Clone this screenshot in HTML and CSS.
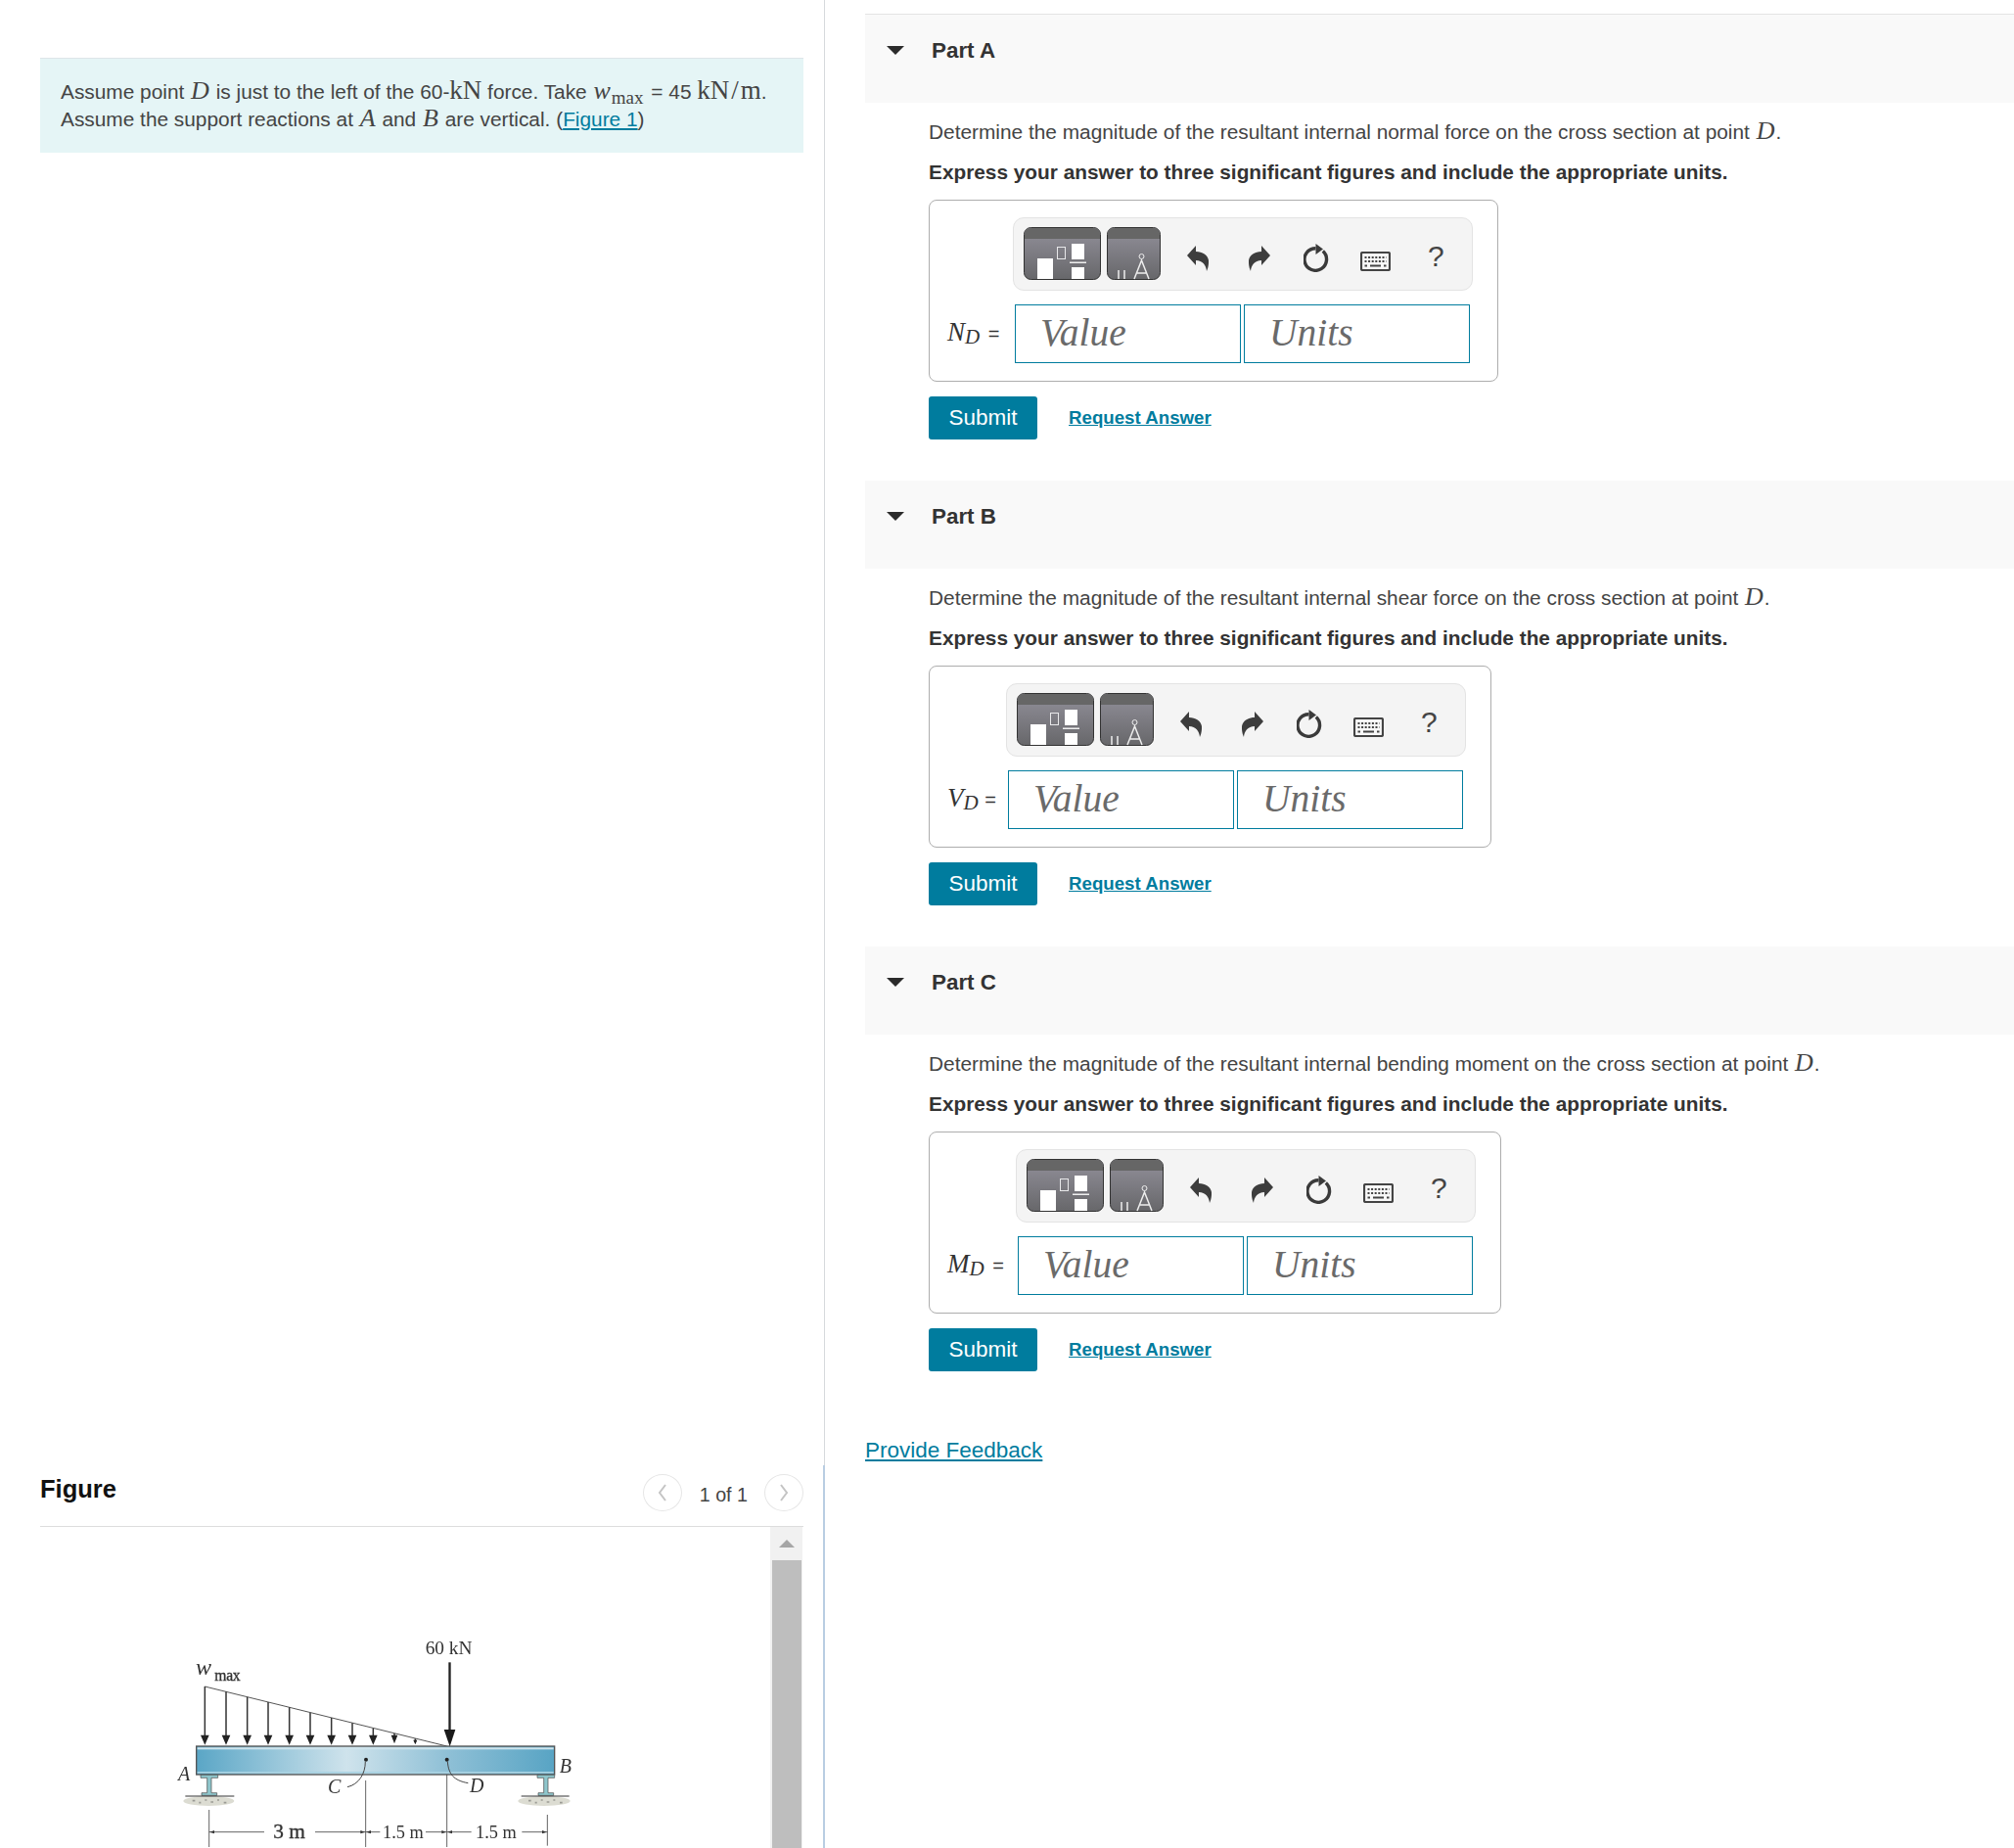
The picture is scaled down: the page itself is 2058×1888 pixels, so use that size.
FILE: index.html
```html
<!DOCTYPE html>
<html lang="en">
<head>
<meta charset="utf-8">
<title>Internal forces</title>
<link rel="stylesheet" href="styles.css">
</head>
<body>
<svg class="defs" width="0" height="0" aria-hidden="true">
  <defs>
    <linearGradient id="btnGrad" x1="0" y1="0" x2="0" y2="1"><stop offset="0" stop-color="#92909a"/><stop offset="1" stop-color="#67676a"/></linearGradient>
    <symbol id="i-tpl" viewBox="0 0 79 54">
      <rect x=".5" y=".5" width="78" height="53" rx="7" fill="url(#btnGrad)" stroke="#333"/>
      <path d="M1 12V7a6 6 0 0 1 6-6h65a6 6 0 0 1 6 6v5z" fill="#666"/>
      <rect x="14" y="32" width="16" height="21" fill="#fff"/>
      <rect x="34.500" y="20.500" width="8" height="12" fill="none" stroke="#e8e8ea"/>
      <rect x="49" y="17" width="13" height="16" fill="#fff"/>
      <rect x="47" y="35.500" width="17" height="1.500" fill="#eee"/>
      <rect x="49" y="41" width="13" height="12" fill="#fff"/>
    </symbol>
    <symbol id="i-unit" viewBox="0 0 55 54">
      <rect x=".5" y=".5" width="54" height="53" rx="7" fill="url(#btnGrad)" stroke="#333"/>
      <path d="M1 12V7a6 6 0 0 1 6-6h41a6 6 0 0 1 6 6v5z" fill="#666"/>
      <path d="M12 44v9M18 44v9" stroke="#eee" stroke-width="1.500"/>
      <path d="M28 53l7.500-19L43 53M31 47h9" fill="none" stroke="#eee" stroke-width="1.500"/>
      <circle cx="35.500" cy="30" r="2.500" fill="none" stroke="#eee"/>
    </symbol>
    <symbol id="i-undo" viewBox="0 0 22 26"><path d="M0 10 9 0V6C17 6 23 11 22 18 21.800 21 21 24 20 26 19.500 20 16 15 9 15V20Z" fill="#3d3d3d"/></symbol>
    <symbol id="i-redo" viewBox="0 0 22 26"><path d="M22 10 13 0V6C5 6-1 11 0 18 .2 21 1 24 2 26 2.500 20 6 15 13 15V20Z" fill="#3d3d3d"/></symbol>
    <symbol id="i-reload" viewBox="0 0 26 29"><path d="M19.800 7.600A11.300 11.300 0 1 1 12.500 4.700" fill="none" stroke="#3a3a3a" stroke-width="3.400"/><path d="M12.500 0 20 5.500 12.500 11Z" fill="#3a3a3a"/></symbol>
    <symbol id="i-keys" viewBox="0 0 31 20">
      <rect x="1" y="1" width="29" height="18" rx="1.500" fill="#f8f8f8" stroke="#444" stroke-width="2.200"/>
      <path d="M4.500 6H26.500M4.500 10H26.500" stroke="#444" stroke-width="2" stroke-dasharray="2 1.600" fill="none"/>
      <path d="M4.500 14.500H7M10 14.500H21M24 14.500H26.500" stroke="#444" stroke-width="2" fill="none"/>
    </symbol>
  </defs>
</svg>

<div class="page">
  <main class="left">
    <div class="intro">
      Assume point <i class="m">D</i> is just to the left of the 60-<span class="mr">kN</span> force. Take <i class="m">w</i><sub class="msub">max</sub> = 45 <span class="mr">kN<span class="slash">/</span>m</span>.<br>
      Assume the support reactions at <i class="m">A</i> and <i class="m">B</i> are vertical. (<a class="link" href="#">Figure 1</a>)
    </div>

    <section class="figure">
      <header class="fig-head">
        <h2 class="fig-title">Figure</h2>
        <div class="pager">
          <span class="round"><svg class="chev" viewBox="0 0 10 18"><path d="M8 1 2 9l6 8" fill="none" stroke="#c4c4c4" stroke-width="2"/></svg></span>
          <span class="count">1 of 1</span>
          <span class="round"><svg class="chev" viewBox="0 0 10 18"><path d="M2 1l6 8-6 8" fill="none" stroke="#c4c4c4" stroke-width="2"/></svg></span>
        </div>
      </header>
      <div class="fig-body">
        <svg class="diagram" viewBox="0 0 1350 714" width="450" height="238">
          <defs>
            <linearGradient id="beam" x1="0" y1="0" x2="1" y2="0">
              <stop offset="0" stop-color="#5aa6c6"/><stop offset=".42" stop-color="#cfe3ec"/><stop offset=".7" stop-color="#8fc0d6"/><stop offset="1" stop-color="#58a4c4"/>
            </linearGradient>
          </defs>
          <ellipse cx="130" cy="573" rx="78" ry="15" fill="#dcdcd2"/>
          <ellipse cx="1158" cy="573" rx="80" ry="15" fill="#dcdcd2"/>
          <path d="M80 572h8M100 578h6M118 570h6M136 576h8M156 570h6M176 578h8M1110 572h8M1130 578h6M1148 570h6M1166 576h8M1186 570h6M1206 578h8" stroke="#9a9a94" stroke-width="5" fill="none"/>
          <path d="M118 222 860 405" stroke="#555" stroke-width="3" fill="none"/>
          <g stroke="#333" stroke-width="4.500" fill="none">
            <path d="M118 222V380M183 238V380M248 254V380M312 270V380M377 286V380M441 302V380M506 318V380M570 334V380M634 350V380M699 366V380M763 382V392"/>
          </g>
          <g fill="#222">
            <path d="M105 371h26l-13 30zM170 371h26l-13 30zM235 371h26l-13 30zM299 371h26l-13 30zM364 371h26l-13 30zM428 371h26l-13 30zM493 371h26l-13 30zM557 371h26l-13 30zM621 371h26l-13 30zM689 371h20l-10 26zM757 386h12l-6 14z"/>
          </g>
          <rect x="92" y="405" width="1098" height="87" fill="url(#beam)" stroke="#555" stroke-width="4"/>
          <rect x="95" y="409" width="1092" height="6" fill="#cfe4ec"/>
          <rect x="95" y="483" width="1092" height="5" fill="#a9d2e2"/>
          <rect x="865" y="148" width="7" height="215" fill="#222"/>
          <path d="M851 354h35l-17 52z" fill="#1a1a1a"/>
          <circle cx="612" cy="446" r="6" fill="#222"/>
          <circle cx="860" cy="446" r="6" fill="#222"/>
          <path d="M610 452C610 490 590 522 555 530M862 452C865 490 880 510 925 518" stroke="#444" stroke-width="3" fill="none"/>
          <g fill="#8fc6cc" stroke="#444" stroke-width="2">
            <path d="M105 493h53v9h-20v46h17v8h-47v-8h17v-46h-20z"/>
            <path d="M1137 493h53v9h-20v46h17v8h-47v-8h17v-46h-20z"/>
          </g>
          <path d="M58 558H208M1088 558H1235" stroke="#333" stroke-width="3"/>
          <g stroke="#444" stroke-width="2.500" fill="none">
            <path d="M131 600V714M611 510V714M860 492V714M1168 615V710"/>
            <path d="M131 668H300M456 668H611M611 668H655M795 668H860M860 668H935M1090 668H1168"/>
          </g>
          <path d="M133 668l14-5v10zM609 668l-14-5v10zM613 668l14-5v10zM858 668l-14-5v10zM862 668l14-5v10zM1166 668l-14-5v10z" fill="#333"/>
          <g>
            <text x="794" y="122" class="dt-n">60 kN</text>
            <text x="90" y="186" class="dt-i dt-w">w</text>
            <text x="148" y="205" class="dt-s">max</text>
            <text x="36" y="511" class="dt-i">A</text>
            <text x="1205" y="487" class="dt-i">B</text>
            <text x="495" y="549" class="dt-i">C</text>
            <text x="930" y="545" class="dt-i">D</text>
            <text x="328" y="688" class="dt-b">3 m</text>
            <text x="663" y="688" class="dt-n2">1.5 m</text>
            <text x="948" y="688" class="dt-n2">1.5 m</text>
          </g>
        </svg>
        <div class="scrollbar"><span class="sb-btn"><span class="sb-up"></span></span><span class="sb-thumb"></span></div>
      </div>
    </section>
  </main>

  <div class="right">
    <section class="part part-first">
      <header class="part-head"><span class="caret"></span><h3 class="part-title">Part A</h3></header>
      <div class="part-body">
        <p class="q">Determine the magnitude of the resultant internal normal force on the cross section at point <i class="m">D</i>.</p>
        <p class="req">Express your answer to three significant figures and include the appropriate units.</p>
        <div class="answer">
          <div class="toolbar">
            <svg class="tb-tpl"><use href="#i-tpl"/></svg>
            <svg class="tb-unit"><use href="#i-unit"/></svg>
            <svg class="ic ic-undo"><use href="#i-undo"/></svg>
            <svg class="ic ic-redo"><use href="#i-redo"/></svg>
            <svg class="ic-reload"><use href="#i-reload"/></svg>
            <svg class="ic-keys"><use href="#i-keys"/></svg>
            <span class="ic-help">?</span>
          </div>
          <div class="lab lab-a"><i class="lab-v">N</i><i class="lab-s">D</i> =</div>
          <div class="fields"><span class="field">Value</span><span class="field">Units</span></div>
        </div>
        <div class="actions"><button class="submit">Submit</button><a class="reqans" href="#">Request Answer</a></div>
      </div>
    </section>

    <section class="part">
      <header class="part-head"><span class="caret"></span><h3 class="part-title">Part B</h3></header>
      <div class="part-body">
        <p class="q">Determine the magnitude of the resultant internal shear force on the cross section at point <i class="m">D</i>.</p>
        <p class="req">Express your answer to three significant figures and include the appropriate units.</p>
        <div class="answer">
          <div class="toolbar">
            <svg class="tb-tpl"><use href="#i-tpl"/></svg>
            <svg class="tb-unit"><use href="#i-unit"/></svg>
            <svg class="ic ic-undo"><use href="#i-undo"/></svg>
            <svg class="ic ic-redo"><use href="#i-redo"/></svg>
            <svg class="ic-reload"><use href="#i-reload"/></svg>
            <svg class="ic-keys"><use href="#i-keys"/></svg>
            <span class="ic-help">?</span>
          </div>
          <div class="lab lab-b"><i class="lab-v">V</i><i class="lab-s">D</i> =</div>
          <div class="fields"><span class="field">Value</span><span class="field">Units</span></div>
        </div>
        <div class="actions"><button class="submit">Submit</button><a class="reqans" href="#">Request Answer</a></div>
      </div>
    </section>

    <section class="part">
      <header class="part-head"><span class="caret"></span><h3 class="part-title">Part C</h3></header>
      <div class="part-body">
        <p class="q">Determine the magnitude of the resultant internal bending moment on the cross section at point <i class="m">D</i>.</p>
        <p class="req">Express your answer to three significant figures and include the appropriate units.</p>
        <div class="answer">
          <div class="toolbar">
            <svg class="tb-tpl"><use href="#i-tpl"/></svg>
            <svg class="tb-unit"><use href="#i-unit"/></svg>
            <svg class="ic ic-undo"><use href="#i-undo"/></svg>
            <svg class="ic ic-redo"><use href="#i-redo"/></svg>
            <svg class="ic-reload"><use href="#i-reload"/></svg>
            <svg class="ic-keys"><use href="#i-keys"/></svg>
            <span class="ic-help">?</span>
          </div>
          <div class="lab lab-c"><i class="lab-v">M</i><i class="lab-s">D</i> =</div>
          <div class="fields"><span class="field">Value</span><span class="field">Units</span></div>
        </div>
        <div class="actions"><button class="submit">Submit</button><a class="reqans" href="#">Request Answer</a></div>
      </div>
    </section>

    <a class="feedback" href="#">Provide Feedback</a>
  </div>
</div>
</body>
</html>
```

FILE: styles.css
```css
* { box-sizing: border-box; }
html, body { margin: 0; padding: 0; background: #fff; }
body { width: 2058px; height: 1888px; overflow: hidden; font-family: "Liberation Sans", Arial, sans-serif; font-size: 20px; color: #333; }
.defs { position: absolute; }
.page { display: flex; width: 2058px; height: 1888px; }

.left { width: 843px; flex: none; padding: 59px 22px 0 41px; display: flex; flex-direction: column; background: linear-gradient(#d6d9dc, #d6d9dc) right top / 1px 1497px no-repeat, linear-gradient(#b9cde2, #b9cde2) right bottom / 2px 391px no-repeat; }
.intro { height: 97px; background: #e5f5f6; border-top: 1px solid #dde5e8; padding: 20px 20px 0 21px; line-height: 28px; font-size: 20.850px; color: #444; }
.m { font-family: "Liberation Serif", serif; font-style: italic; font-size: 26px; line-height: 0; margin: 0 1px; }
.mr { font-family: "Liberation Serif", serif; font-size: 27px; line-height: 0; }
.slash { margin: 0 2px; }
.msub { font-family: "Liberation Serif", serif; font-size: 19px; line-height: 0; margin-right: 2px; }
.link { color: #007c9e; text-decoration: underline; }

.figure { margin-top: 1350px; flex: 1; display: flex; flex-direction: column; min-height: 0; }
.fig-head { display: flex; justify-content: space-between; align-items: flex-start; height: 54px; border-bottom: 1px solid #ddd; }
.fig-title { margin: 0; font-size: 25.500px; line-height: 30px; font-weight: bold; color: #111; }
.pager { display: flex; align-items: center; height: 38px; }
.round { width: 40px; height: 38px; border: 1px solid #e6e6e6; border-radius: 50%; display: flex; align-items: center; justify-content: center; }
.chev { width: 10px; height: 18px; }
.count { margin: 5px 17px 0 18px; font-size: 19.700px; color: #444; }

.fig-body { position: relative; flex: 1; min-height: 0; overflow: hidden; padding: 89px 0 0 129px; }
.diagram { display: block; filter: blur(.5px); }
.dt-n { font: 58px "Liberation Serif", serif; fill: #333; }
.dt-n2 { font: 55px "Liberation Serif", serif; fill: #333; }
.dt-b { font: 64px "Liberation Serif", serif; fill: #333; stroke: #333; stroke-width: 1px; }
.dt-i { font: italic 60px "Liberation Serif", serif; fill: #333; }
.dt-w { font-size: 72px; }
.dt-s { font: 47px "Liberation Serif", serif; fill: #333; stroke: #333; stroke-width: 1px; letter-spacing: -1px; }
.scrollbar { position: absolute; top: 0; right: 1px; bottom: 0; width: 33px; background: #f1f1f1; display: flex; flex-direction: column; align-items: center; }
.sb-btn { height: 34px; flex: none; display: flex; align-items: center; justify-content: center; width: 100%; }
.sb-up { width: 0; height: 0; border-left: 8px solid transparent; border-right: 8px solid transparent; border-bottom: 8px solid #a6a6a6; }
.sb-thumb { width: 30px; flex: 1; background: #bebebe; }

.right { flex: 1; padding: 14px 0 0 41px; min-width: 0; }
.part { height: 476px; border-top: 1px solid transparent; }
.part-first { border-top-color: #e4e4e4; }
.part-head { height: 90px; background: #f9f9f9; display: flex; align-items: flex-start; padding: 25px 0 0 22px; }
.caret { width: 0; height: 0; margin-top: 7px; border-left: 9px solid transparent; border-right: 9px solid transparent; border-top: 9px solid #2b2b2b; }
.part-title { margin: 0 0 0 28px; font-size: 22.400px; line-height: 24px; font-weight: bold; color: #333; }
.part-body { padding: 0 0 0 65px; }
.q { margin: 0; padding-top: 16px; line-height: 28px; font-size: 20.850px; color: #444; }
.req { margin: 13px 0 0; line-height: 28px; font-size: 20.820px; font-weight: bold; color: #333; }
.answer { display: inline-grid; grid-template-columns: auto auto; column-gap: 15px; row-gap: 14px; align-items: center; margin-top: 14px; border: 1px solid #adadad; border-radius: 8px; padding: 17px 28px 18px 18px; background: #fff; vertical-align: top; }
.toolbar { grid-column: 2; margin: 0 -3px 0 -2px; height: 75px; background: #f4f4f4; border: 1px solid #e3e3e3; border-radius: 11px; display: flex; align-items: center; padding-left: 10px; }
.tb-tpl { width: 79px; height: 54px; margin-top: -1px; flex: none; }
.tb-unit { width: 55px; height: 54px; margin: -1px 0 0 6px; flex: none; }
.ic { width: 22px; height: 26px; flex: none; margin-top: 8px; }
.ic-undo { margin-left: 27px; }
.ic-redo { margin-left: 41px; }
.ic-reload { width: 26px; height: 29px; flex: none; margin: 7px 0 0 34px; }
.ic-keys { width: 31px; height: 20px; flex: none; margin: 14px 0 0 32px; }
.ic-help { margin: 5px 0 0 38px; font-size: 30px; line-height: 32px; color: #444; }
.lab { grid-row: 2; font-size: 20px; color: #333; white-space: nowrap; margin-top: -4px; }
.lab-a { width: 54px; }
.lab-b { width: 47px; }
.lab-c { width: 57px; }
.lab-v { font-family: "Liberation Serif", serif; font-size: 27px; }
.lab-s { font-family: "Liberation Serif", serif; font-size: 21px; position: relative; top: 3px; margin-right: 3px; }
.lab-b .lab-s { margin-right: 1px; }
.fields { display: flex; gap: 3px; }
.field { width: 231px; height: 60px; border: 1px solid #007c9e; padding-left: 25px; font: italic 39.500px/57px "Liberation Serif", serif; color: #6a6a6a; }
.actions { display: flex; align-items: center; margin-top: 15px; }
.submit { width: 111px; height: 44px; border: 0; border-radius: 3px; background: #007c9e; color: #fff; font: 22.500px "Liberation Sans", sans-serif; padding: 0; }
.reqans { margin-left: 32px; margin-top: -1px; font-size: 18.700px; font-weight: bold; color: #007c9e; text-decoration: underline; }
.feedback { display: block; margin-top: 27px; font-size: 22.500px; line-height: 26px; color: #007c9e; text-decoration: underline; }
```
